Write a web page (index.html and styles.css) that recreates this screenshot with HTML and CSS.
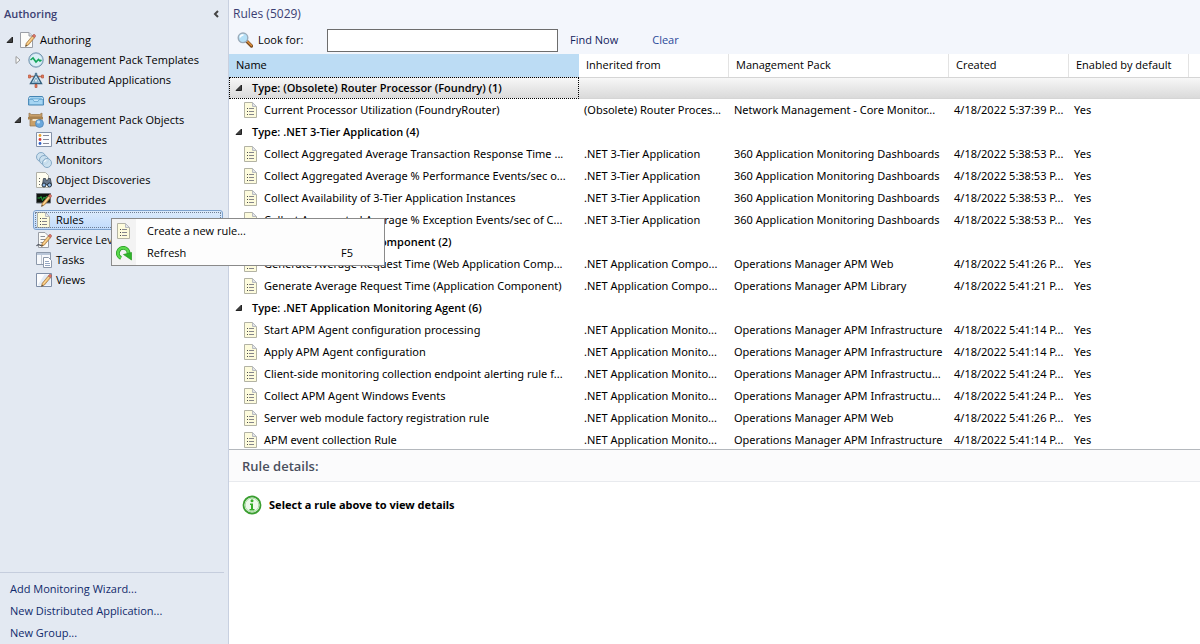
FILE: index.html
```
<!DOCTYPE html>
<html lang="en">
<head>
    <meta charset="UTF-8">
    <meta name="viewport" content="width=device-width, initial-scale=1.0">
    <title>Authoring - Rules</title>
    <link rel="stylesheet" href="styles.css">
</head>
<body>
    <!-- shared icons -->
    <svg class="sprite" aria-hidden="true">
        <symbol id="i-rule" viewBox="0 0 16 16">
            <path d="M1.500.5h8l4 4v11h-12z" fill="#fdfbdc" stroke="#b3b3a4"/>
            <path d="M9.500.5v4h4z" fill="#e4e6e8" stroke="#b9bcc0"/>
            <path d="M4 6.500h1M4 9.500h1M4 12.500h1" stroke="#4a4a4a"/>
            <path d="M6 6.500h5M6 9.500h5M6 12.500h5" stroke="#85858c"/>
        </symbol>
        <symbol id="i-open" viewBox="0 0 8 8">
            <path d="M6.500 1v5.500H1z" fill="#404040" stroke="#222"/>
        </symbol>
        <symbol id="i-closed" viewBox="0 0 8 8">
            <path d="M2 .5v7L6 4z" fill="#fff" stroke="#9a9a9a"/>
        </symbol>
        <symbol id="i-pencil" viewBox="0 0 16 16">
            <path d="M5.500 14.500l.8-3.300L12.300 4l2.200 1.700-6.200 7.400z" fill="#f0b968" stroke="#9a7444" stroke-width=".7"/>
            <path d="M12.300 4l1.100-1.400q.8-.5 1.500.1.900.7.700 1.600L14.500 5.700z" fill="#dd7466" stroke="#a0574b" stroke-width=".6"/>
            <path d="M5.500 14.500l.4-1.700 1.100.9z" fill="#333"/>
            <path d="M7.400 11.800l5.600-6.600" stroke="#fde3b0" stroke-width=".8"/>
        </symbol>
        <symbol id="i-authoring" viewBox="0 0 16 16">
            <path d="M.5.5H9l3.500 3.500v11.500H.5z" fill="#fcfcfa" stroke="#9a9ea6"/>
            <path d="M9 .5V4h3.500" fill="#dde0e6" stroke="#9a9ea6"/>
            <use href="#i-pencil"/>
        </symbol>
        <symbol id="i-template" viewBox="0 0 16 16">
            <circle cx="8" cy="8" r="7.200" fill="#b5d3e8" stroke="#7596ad"/>
            <circle cx="8" cy="8" r="5.600" fill="#d8eff5" stroke="#f2f9fc" stroke-width=".6"/>
            <path d="M2.500 8L5 6l3 4 2.500-2.500L12 9l1.500-1" fill="none" stroke="#12a55a" stroke-width="1.600"/>
        </symbol>
        <symbol id="i-distributed" viewBox="0 0 16 16">
            <path d="M1 4.500h14M8 11v4" stroke="#b5755c" stroke-width="1.500"/>
            <path d="M8 2L2.500 11.500h11z" fill="#bfe1f5" stroke="#34607f" stroke-width="1.400"/>
            <path d="M8 6L5.800 10h4.400z" fill="#f2f8fc" stroke="#5a87a4" stroke-width=".7"/>
            <path d="M.5 3h2v3h-2zM13.500 3h2v3h-2zM7 12.500h2v3H7z" fill="#e8795a" stroke="#b4583f" stroke-width=".7"/>
            <circle cx="8" cy="2" r="1.300" fill="#547c99"/>
        </symbol>
        <symbol id="i-group" viewBox="0 0 16 16">
            <path d="M1.500 4.500h13l1 2v6.500H.5V6.500z" fill="#c8e6f8" stroke="#4585b4"/>
            <path d="M2.500 5.500h11l.8 2H1.700z" fill="#7ebce4"/>
            <path d="M1 7.500h4l1 2h4l1-2h4v5H1z" fill="#a5d5f3" stroke="#5f9dc9" stroke-width=".7"/>
        </symbol>
        <symbol id="i-objects" viewBox="0 0 16 16">
            <path d="M1 1l2.500 1.500h8L14 1v4H1z" fill="#c9a069" stroke="#94744a" stroke-width=".7"/>
            <path d="M0 5h15v2.500H0z" fill="#a8824f"/>
            <path d="M2 7.500h11v6.500H2z" fill="#c9a069" stroke="#94744a" stroke-width=".7"/>
            <path d="M4.500 7h6v2h-6z" fill="#f3e3c8"/>
            <circle cx="11.500" cy="11.500" r="4" fill="#6aa7dc" stroke="#4a7fb0" stroke-width=".7"/>
            <circle cx="10.500" cy="10" r="1.600" fill="#b9dcf5"/>
        </symbol>
        <symbol id="i-attribute" viewBox="0 0 16 16">
            <path d="M.5.5h15v14H.5z" fill="#fbfcfe" stroke="#8492a8"/>
            <circle cx="4" cy="3.500" r="1.400" fill="#e8a332"/>
            <circle cx="4" cy="7.500" r="1.400" fill="#d23b3b"/>
            <circle cx="4" cy="11.500" r="1.400" fill="#2f5fc4"/>
            <path d="M7 3.500h6M7 7.500h6M7 11.500h6" stroke="#85899a"/>
        </symbol>
        <symbol id="i-monitor" viewBox="0 0 16 16">
            <g fill="#c9dfef" fill-opacity=".85" stroke="#86a9c6">
                <circle cx="5" cy="5" r="4.500"/>
                <circle cx="8" cy="8" r="4.500"/>
                <circle cx="11" cy="11" r="4.500"/>
            </g>
            <path d="M8.500 10a3 3 0 0 1 2-2" fill="none" stroke="#fff"/>
        </symbol>
        <symbol id="i-discovery" viewBox="0 0 16 16">
            <path d="M.5.5h9l3 3v12H.5z" fill="#fffdf0" stroke="#b0b0a8"/>
            <path d="M3 6.500h1M3 9.500h1M3 12.500h1" stroke="#666"/>
            <path d="M7.500 6.500h2l.8 2h1.200l.8-2h2l1.200 6H6.500z" fill="#68788c" stroke="#333d49" stroke-width=".8"/>
            <circle cx="8" cy="13" r="2" fill="#8bb5e2" stroke="#26303b"/>
            <circle cx="13.500" cy="13" r="2" fill="#8bb5e2" stroke="#26303b"/>
        </symbol>
        <symbol id="i-override" viewBox="0 0 16 16">
            <path d="M.5 1.500h14v9.500H.5z" fill="#101410" stroke="#6b7078"/>
            <path d="M1.500 6H4l1-1.500L6.500 8.500 8 5l1 1.500 2-2.500" fill="none" stroke="#22a53b"/>
            <use href="#i-pencil"/>
        </symbol>
        <symbol id="i-service" viewBox="0 0 16 16">
            <path d="M2.500.5H9l3.500 3.500v11.500h-10z" fill="#fbfbf8" stroke="#9a9ea6"/>
            <path d="M4.500 4.500H9M4.500 7.500h5M4.500 10.500H7" stroke="#8c8f96"/>
            <path d="M.5 14c3-4 3 1 6-1" fill="none" stroke="#4b4f58" stroke-width="1.200"/>
            <use href="#i-pencil"/>
        </symbol>
        <symbol id="i-task" viewBox="0 0 16 16">
            <path d="M.5.5h14v12H.5z" fill="#f7f9fc" stroke="#8c98aa"/>
            <path d="M1 1h13v2H1z" fill="#b9c6d8"/>
            <path d="M5.500 3v9" stroke="#c2cad5"/>
            <path d="M7.500 5.500h5l3 3v7h-8z" fill="#fff" stroke="#8c98aa"/>
            <path d="M9 9.500h4M9 11.500h5M9 13.500h5" stroke="#94a6c2"/>
        </symbol>
        <symbol id="i-view" viewBox="0 0 16 16">
            <path d="M.5 1.500h15v13H.5z" fill="#fdfdfe" stroke="#7e8da5"/>
            <path d="M1.500 13.500l7-11h6v11z" fill="#e3ebf5"/>
            <use href="#i-pencil"/>
        </symbol>
        <symbol id="i-search" viewBox="0 0 16 16">
            <path d="M10 9.500l4.500 4.500" stroke="#7a4a1e" stroke-width="3.200" stroke-linecap="round"/>
            <path d="M10.500 9.500l4 4" stroke="#e0903c" stroke-width="1.500" stroke-linecap="round"/>
            <circle cx="6" cy="5.800" r="4.800" fill="#b5e0f7" stroke="#9aabba" stroke-width="1.400"/>
            <path d="M3.200 5.500A3 3 0 0 1 6.500 3" fill="none" stroke="#fff" stroke-width="1.500"/>
        </symbol>
        <symbol id="i-refresh" viewBox="0 0 16 16">
            <path d="M5 13A5.300 5.300 0 1 1 12.500 8.500" fill="none" stroke="#249a1f" stroke-width="3.800"/>
            <path d="M5 13A5.300 5.300 0 1 1 12.500 8.500" fill="none" stroke="#5bd84c" stroke-width="2.400"/>
            <path d="M7.500 9.500l8-2v7.500z" fill="#2fb52a" stroke="#249a1f" stroke-width=".7"/>
        </symbol>
        <symbol id="i-info" viewBox="0 0 20 20">
            <circle cx="10" cy="10" r="8.500" fill="#fff" stroke="#3a9e30" stroke-width="1.800"/>
            <circle cx="10" cy="10" r="6.900" fill="#eef8ec" stroke="#a5d99e"/>
            <path d="M8 8.500h3v5.500h1.500v1.500h-5V14H9v-4H8z" fill="#35ac28"/>
            <circle cx="10" cy="5.800" r="1.500" fill="#35ac28"/>
        </symbol>
    </svg>

    <div class="console">
        <aside class="sidebar">
            <header class="sidebar-title">
                <h2>Authoring</h2>
                <button class="collapse" type="button" aria-label="Collapse pane">
                    <svg viewBox="0 0 6 8"><path d="M5 1L2 4l3 3" fill="none" stroke="#444" stroke-width="2"/></svg>
                </button>
            </header>

            <ul class="tree">
                <li class="node level-1"><svg class="arrow"><use href="#i-open"/></svg><svg class="icon"><use href="#i-authoring"/></svg><a href="#">Authoring</a></li>
                <li class="node level-2"><svg class="arrow"><use href="#i-closed"/></svg><svg class="icon"><use href="#i-template"/></svg><a href="#">Management Pack Templates</a></li>
                <li class="node level-2"><span class="arrow"></span><svg class="icon"><use href="#i-distributed"/></svg><a href="#">Distributed Applications</a></li>
                <li class="node level-2"><span class="arrow"></span><svg class="icon"><use href="#i-group"/></svg><a href="#">Groups</a></li>
                <li class="node level-2"><svg class="arrow"><use href="#i-open"/></svg><svg class="icon"><use href="#i-objects"/></svg><a href="#">Management Pack Objects</a></li>
                <li class="node level-3"><svg class="icon"><use href="#i-attribute"/></svg><a href="#">Attributes</a></li>
                <li class="node level-3"><svg class="icon"><use href="#i-monitor"/></svg><a href="#">Monitors</a></li>
                <li class="node level-3"><svg class="icon"><use href="#i-discovery"/></svg><a href="#">Object Discoveries</a></li>
                <li class="node level-3"><svg class="icon"><use href="#i-override"/></svg><a href="#">Overrides</a></li>
                <li class="node level-3 selected"><svg class="icon"><use href="#i-rule"/></svg><a href="#">Rules</a></li>
                <li class="node level-3"><svg class="icon"><use href="#i-service"/></svg><a href="#">Service Level Tracking</a></li>
                <li class="node level-3"><svg class="icon"><use href="#i-task"/></svg><a href="#">Tasks</a></li>
                <li class="node level-3"><svg class="icon"><use href="#i-view"/></svg><a href="#">Views</a></li>
            </ul>

            <nav class="wizards">
                <a href="#">Add Monitoring Wizard...</a>
                <a href="#">New Distributed Application...</a>
                <a href="#">New Group...</a>
            </nav>
        </aside>

        <main class="content">
            <h1>Rules (5029)</h1>
            <form class="search">
                <svg class="icon"><use href="#i-search"/></svg>
                <label for="look">Look for:</label>
                <input type="text" id="look" name="look">
                <button type="button">Find Now</button>
                <button type="button" class="clear">Clear</button>
            </form>

            <div class="list">
                <table>
                    <colgroup>
                        <col class="col-name">
                        <col class="col-inherited">
                        <col class="col-pack">
                        <col class="col-date">
                        <col class="col-enabled">
                        <col>
                    </colgroup>
                    <thead>
                        <tr><th class="sorted">Name</th><th>Inherited from</th><th>Management Pack</th><th>Created</th><th>Enabled by default</th><th></th></tr>
                    </thead>
                    <tbody>
                        <tr class="group focused"><td><svg class="arrow"><use href="#i-open"/></svg>Type: (Obsolete) Router Processor (Foundry) (1)</td><td colspan="5"></td></tr>
                        <tr><td><svg class="icon"><use href="#i-rule"/></svg>Current Processor Utilization (FoundryRouter)</td><td>(Obsolete) Router Proces...</td><td>Network Management - Core Monitor...</td><td>4/18/2022 5:37:39 P...</td><td>Yes</td><td></td></tr>
                        <tr class="group"><td colspan="6"><svg class="arrow"><use href="#i-open"/></svg>Type: .NET 3-Tier Application (4)</td></tr>
                        <tr><td><svg class="icon"><use href="#i-rule"/></svg>Collect Aggregated Average Transaction Response Time ...</td><td>.NET 3-Tier Application</td><td>360 Application Monitoring Dashboards</td><td>4/18/2022 5:38:53 P...</td><td>Yes</td><td></td></tr>
                        <tr><td><svg class="icon"><use href="#i-rule"/></svg>Collect Aggregated Average % Performance Events/sec o...</td><td>.NET 3-Tier Application</td><td>360 Application Monitoring Dashboards</td><td>4/18/2022 5:38:53 P...</td><td>Yes</td><td></td></tr>
                        <tr><td><svg class="icon"><use href="#i-rule"/></svg>Collect Availability of 3-Tier Application Instances</td><td>.NET 3-Tier Application</td><td>360 Application Monitoring Dashboards</td><td>4/18/2022 5:38:53 P...</td><td>Yes</td><td></td></tr>
                        <tr><td><svg class="icon"><use href="#i-rule"/></svg>Collect Aggregated Average % Exception Events/sec of C...</td><td>.NET 3-Tier Application</td><td>360 Application Monitoring Dashboards</td><td>4/18/2022 5:38:53 P...</td><td>Yes</td><td></td></tr>
                        <tr class="group"><td colspan="6"><svg class="arrow"><use href="#i-open"/></svg>Type: .NET Application Component (2)</td></tr>
                        <tr><td><svg class="icon"><use href="#i-rule"/></svg>Generate Average Request Time (Web Application Comp...</td><td>.NET Application Compo...</td><td>Operations Manager APM Web</td><td>4/18/2022 5:41:26 P...</td><td>Yes</td><td></td></tr>
                        <tr><td><svg class="icon"><use href="#i-rule"/></svg>Generate Average Request Time (Application Component)</td><td>.NET Application Compo...</td><td>Operations Manager APM Library</td><td>4/18/2022 5:41:21 P...</td><td>Yes</td><td></td></tr>
                        <tr class="group"><td colspan="6"><svg class="arrow"><use href="#i-open"/></svg>Type: .NET Application Monitoring Agent (6)</td></tr>
                        <tr><td><svg class="icon"><use href="#i-rule"/></svg>Start APM Agent configuration processing</td><td>.NET Application Monito...</td><td>Operations Manager APM Infrastructure</td><td>4/18/2022 5:41:14 P...</td><td>Yes</td><td></td></tr>
                        <tr><td><svg class="icon"><use href="#i-rule"/></svg>Apply APM Agent configuration</td><td>.NET Application Monito...</td><td>Operations Manager APM Infrastructure</td><td>4/18/2022 5:41:14 P...</td><td>Yes</td><td></td></tr>
                        <tr><td><svg class="icon"><use href="#i-rule"/></svg>Client-side monitoring collection endpoint alerting rule f...</td><td>.NET Application Monito...</td><td>Operations Manager APM Infrastructu...</td><td>4/18/2022 5:41:24 P...</td><td>Yes</td><td></td></tr>
                        <tr><td><svg class="icon"><use href="#i-rule"/></svg>Collect APM Agent Windows Events</td><td>.NET Application Monito...</td><td>Operations Manager APM Infrastructu...</td><td>4/18/2022 5:41:24 P...</td><td>Yes</td><td></td></tr>
                        <tr><td><svg class="icon"><use href="#i-rule"/></svg>Server web module factory registration rule</td><td>.NET Application Monito...</td><td>Operations Manager APM Web</td><td>4/18/2022 5:41:26 P...</td><td>Yes</td><td></td></tr>
                        <tr><td><svg class="icon"><use href="#i-rule"/></svg>APM event collection Rule</td><td>.NET Application Monito...</td><td>Operations Manager APM Infrastructure</td><td>4/18/2022 5:41:14 P...</td><td>Yes</td><td></td></tr>
                    </tbody>
                </table>
            </div>

            <section class="details">
                <h3>Rule details:</h3>
                <p><svg class="info"><use href="#i-info"/></svg>Select a rule above to view details</p>
            </section>
        </main>
    </div>

    <div class="context-menu">
        <button type="button"><svg class="icon"><use href="#i-rule"/></svg><span>Create a new rule...</span></button>
        <button type="button"><svg class="icon"><use href="#i-refresh"/></svg><span>Refresh</span><kbd>F5</kbd></button>
    </div>
</body>
</html>
```
FILE: styles.css
```
* {
    box-sizing: border-box;
}
body {
    margin: 0;
    font-family: "Open Sans", "Noto Sans", sans-serif;
    font-size: 11px;
    line-height: 20px;
    color: #000;
}
h1, h2, h3, p, ul {
    margin: 0;
    padding: 0;
}
a {
    color: inherit;
    text-decoration: none;
}
button {
    padding: 0;
    border: none;
    background: none;
    font: inherit;
    color: inherit;
    cursor: pointer;
}
.sprite {
    display: none;
}
.icon {
    width: 16px;
    height: 16px;
    flex: none;
}
.arrow {
    width: 8px;
    height: 8px;
    flex: none;
}
.console {
    display: flex;
    height: 100vh;
    overflow: hidden;
}

/* left pane */
.sidebar {
    display: flex;
    flex-direction: column;
    width: 229px;
    flex: none;
    background: #e3e9f2;
    border-right: 1px solid #c8d0e0;
    white-space: nowrap;
}
.sidebar-title {
    display: flex;
    justify-content: space-between;
    align-items: center;
    height: 30px;
    padding: 0 9px 2px 4px;
}
.sidebar-title h2,
.content h1 {
    font-size: 12px;
    font-weight: 600;
    color: #3b3f73;
}
.sidebar-title h2 {
    font-size: 11px;
}
.collapse svg {
    display: block;
    width: 6px;
    height: 8px;
}
.tree {
    flex: 1;
    list-style: none;
}
.node {
    display: flex;
    align-items: center;
    gap: 4px;
    height: 20px;
    margin-right: 5px;
}
.node .arrow {
    margin-right: 2px;
}
.level-1 {
    padding-left: 6px;
}
.level-2 {
    padding-left: 14px;
}
.level-3 {
    margin-left: 33px;
    padding-left: 3px;
}
.selected {
    border: 1px solid #7da2ce;
    border-radius: 3px;
    padding-left: 2px;
    background: linear-gradient(#dcebfc, #c1dbfc);
    outline: 1px dotted #6f7f95;
    outline-offset: -3px;
}
.wizards {
    display: flex;
    flex-direction: column;
    margin-right: 4px;
    padding: 5px 10px 0;
    border-top: 1px solid #c5cddd;
    line-height: 22px;
    color: #10296b;
}

/* right pane */
.content {
    display: flex;
    flex-direction: column;
    flex: 1;
    min-width: 0;
    background: #f3f6fc;
}
.content h1 {
    height: 28px;
    padding-left: 4px;
    line-height: 28px;
    font-weight: 400;
}
.search {
    display: flex;
    align-items: center;
    height: 26px;
    padding: 0 0 2px 8px;
}
.search label {
    width: 69px;
    margin-left: 5px;
}
.search input {
    width: 231px;
    height: 23px;
    margin-right: 12px;
    border: 1px solid #6d6d6d;
    background: #fff;
    font: inherit;
}
.search button {
    color: #14245c;
}
.search .clear {
    margin-left: 34px;
    color: #2a4a9a;
}
.list {
    flex: 1;
    min-height: 0;
    overflow: hidden;
    background: #fff;
}
table {
    width: 100%;
    table-layout: fixed;
    border-collapse: separate;
    border-spacing: 0;
}
.col-name {
    width: 350px;
}
.col-inherited {
    width: 150px;
}
.col-pack {
    width: 220px;
}
.col-date,
.col-enabled {
    width: 120px;
}
th {
    height: 23px;
    padding: 0 7px 2px;
    border-right: 1px solid #e3e3e3;
    font-weight: 400;
    text-align: left;
    white-space: nowrap;
}
th:last-child {
    border-right: none;
}
th.sorted {
    background: #bcdcf4;
    border-color: #bcdcf4;
}
td {
    height: 22px;
    padding: 0 0 0 5px;
    font-family: "Noto Sans", sans-serif;
    white-space: nowrap;
}
td .icon {
    margin: -1px 5px 1px 9px;
    vertical-align: middle;
}
.group td {
    font-family: "Open Sans", sans-serif;
    font-weight: 600;
}
.group .arrow {
    margin: 0 9px 0 1px;
}
.focused td {
    background: linear-gradient(#f7f7f7, #dadada);
    border-top: 1px solid #d5d5d5;
    border-bottom: 1px solid #d5d5d5;
}
.focused td:first-child {
    border: 1px dotted #000;
    padding-left: 4px;
}
.details {
    flex: none;
    height: 195px;
    border-top: 1px solid #b4b8bd;
    background: #fff;
}
.details h3 {
    height: 32px;
    padding-left: 13px;
    border-bottom: 1px solid #e8eaee;
    background: #fbfbfc;
    font-size: 13px;
    font-weight: 600;
    line-height: 32px;
    color: #4a4f5c;
}
.details p {
    display: flex;
    align-items: center;
    gap: 7px;
    padding: 13px;
    font-family: "Noto Sans", sans-serif;
    font-weight: 700;
}
.info {
    width: 20px;
    height: 20px;
}

/* right-click menu */
.context-menu {
    position: absolute;
    left: 111px;
    top: 218px;
    width: 274px;
    padding: 1px;
    border: 1px solid #8a8a8a;
    background: linear-gradient(90deg, #f3f3f3 24px, #fdfdfd 24px);
}
.context-menu button {
    display: flex;
    align-items: center;
    width: 100%;
    height: 22px;
    padding: 0 30px 0 3px;
    text-align: left;
}
.context-menu span {
    flex: 1;
    margin-left: 15px;
}
.context-menu kbd {
    font: inherit;
}
```
